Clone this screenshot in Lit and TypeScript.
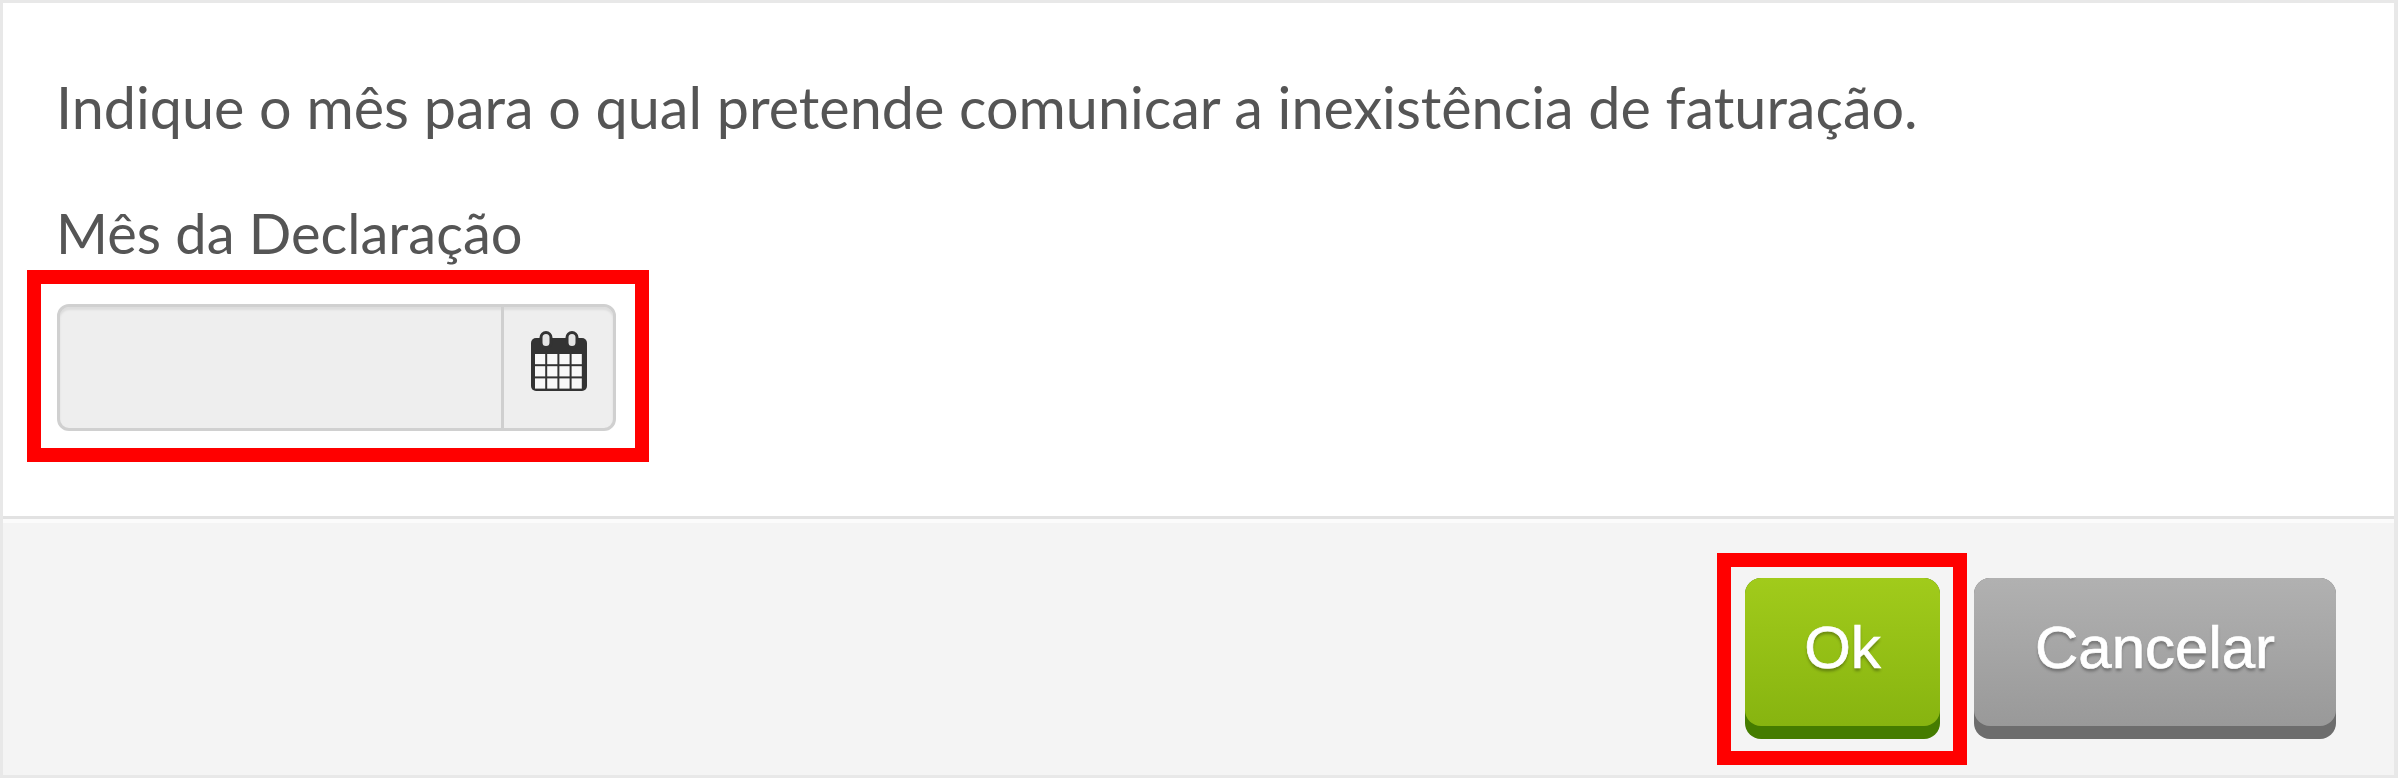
import { LitElement, html, svg, css } from "lit";
import { customElement } from "lit/decorators.js";

@customElement("app-root")
export class AppRoot extends LitElement {
  static styles = css`
    :host { display: block; width: 2398px; height: 778px; }
    .dialog {
      box-sizing: border-box; width: 2398px; height: 778px;
      border: 3px solid #e8e8e8; border-right-width: 4px;
      display: flex; flex-direction: column; background: #fff;
      font-family: "Lato", sans-serif; color: #555;
    }
    .body { height: 513px; box-sizing: border-box; padding: 66px 0 0 53px; display: flex; flex-direction: column; align-items: flex-start; }
    .msg { font-size: 57.5px; line-height: 76px; white-space: nowrap; filter: blur(.6px); }
    .label { font-size: 56px; line-height: 76px; margin-top: 50px; filter: blur(.6px); }
    .mark { display: flex; border: 14px solid #f00; box-sizing: border-box; }
    .mark-field { margin: -1px 0 0 -29px; width: 622px; height: 192px; padding: 20px 19px 17px 16px; }
    .input {
      flex: 1; display: flex; background: #eee; border: 3px solid #d0d0d0; border-radius: 12px;
      box-shadow: inset 0 3px 2px #ddd;
    }
    .input .fill { width: 441px; border-right: 3px solid #cfcfcf; }
    .input .addon { flex: 1; display: flex; align-items: flex-start; justify-content: center; padding-top: 24px; }
    .addon svg { width: 56px; height: 60px; display: block; filter: blur(.7px); }
    .footer {
      flex: 1; background: #f4f4f4; border-top: 3px solid #e2e2e2; box-shadow: inset 0 4px 0 #fbfbfb;
      display: flex; justify-content: flex-end; align-items: flex-start; padding: 34px 58px 0 0; box-sizing: border-box;
    }
    .mark-ok { padding: 11px 13px 12px 14px; margin-right: 7px; height: 212px; width: 250px; }
    .btn {
      box-sizing: border-box; height: 161px; border-radius: 16px; padding-bottom: 13px; display: flex;
      font-family: "Liberation Sans", Arial, sans-serif; font-size: 60px; color: #fff;
    }
    .face {
      flex: 1; border-radius: 16px; padding-bottom: 9px;
      display: flex; align-items: center; justify-content: center;
    }
    .face span { filter: blur(.5px); -webkit-text-stroke: .7px #fff; text-shadow: 0 3px 3px rgba(0,0,0,.3); }
    .ok { width: 196px; background: #457c00; }
    .ok .face { background: linear-gradient(#a1cb1b, #87b410); }
    .cancel { width: 362px; margin-top: 25px; background: #6d6d6d; }
    .cancel .face { background: linear-gradient(#b1b1b1, #999); }
  `;
  render() {
    const cells = [0, 1, 2, 3].flatMap((c) =>
      [0, 1, 2].map((r) => svg`<rect x="${4 + c * 12.2}" y="${23 + r * 12.2}" width="10.2" height="10.2" />`)
    );
    return html`<div class="dialog">
      <div class="body">
        <div class="msg">Indique o mês para o qual pretende comunicar a inexistência de faturação.</div>
        <div class="label">Mês da Declaração</div>
        <div class="mark mark-field">
          <div class="input">
            <div class="fill"></div>
            <div class="addon">
              <svg viewBox="0 0 56 60" aria-hidden="true">
                <rect x="0" y="7" width="56" height="53" rx="5" fill="#333" />
                <g fill="#f8f8f8">${cells}</g>
                <rect x="10" y="1.5" width="10" height="15" rx="5" fill="#e4e4e4" stroke="#333" stroke-width="3" />
                <rect x="36" y="1.5" width="10" height="15" rx="5" fill="#e4e4e4" stroke="#333" stroke-width="3" />
              </svg>
            </div>
          </div>
        </div>
      </div>
      <div class="footer">
        <div class="mark mark-ok"><div class="btn ok"><div class="face"><span>Ok</span></div></div></div>
        <div class="btn cancel"><div class="face"><span>Cancelar</span></div></div>
      </div>
    </div>`;
  }
}
